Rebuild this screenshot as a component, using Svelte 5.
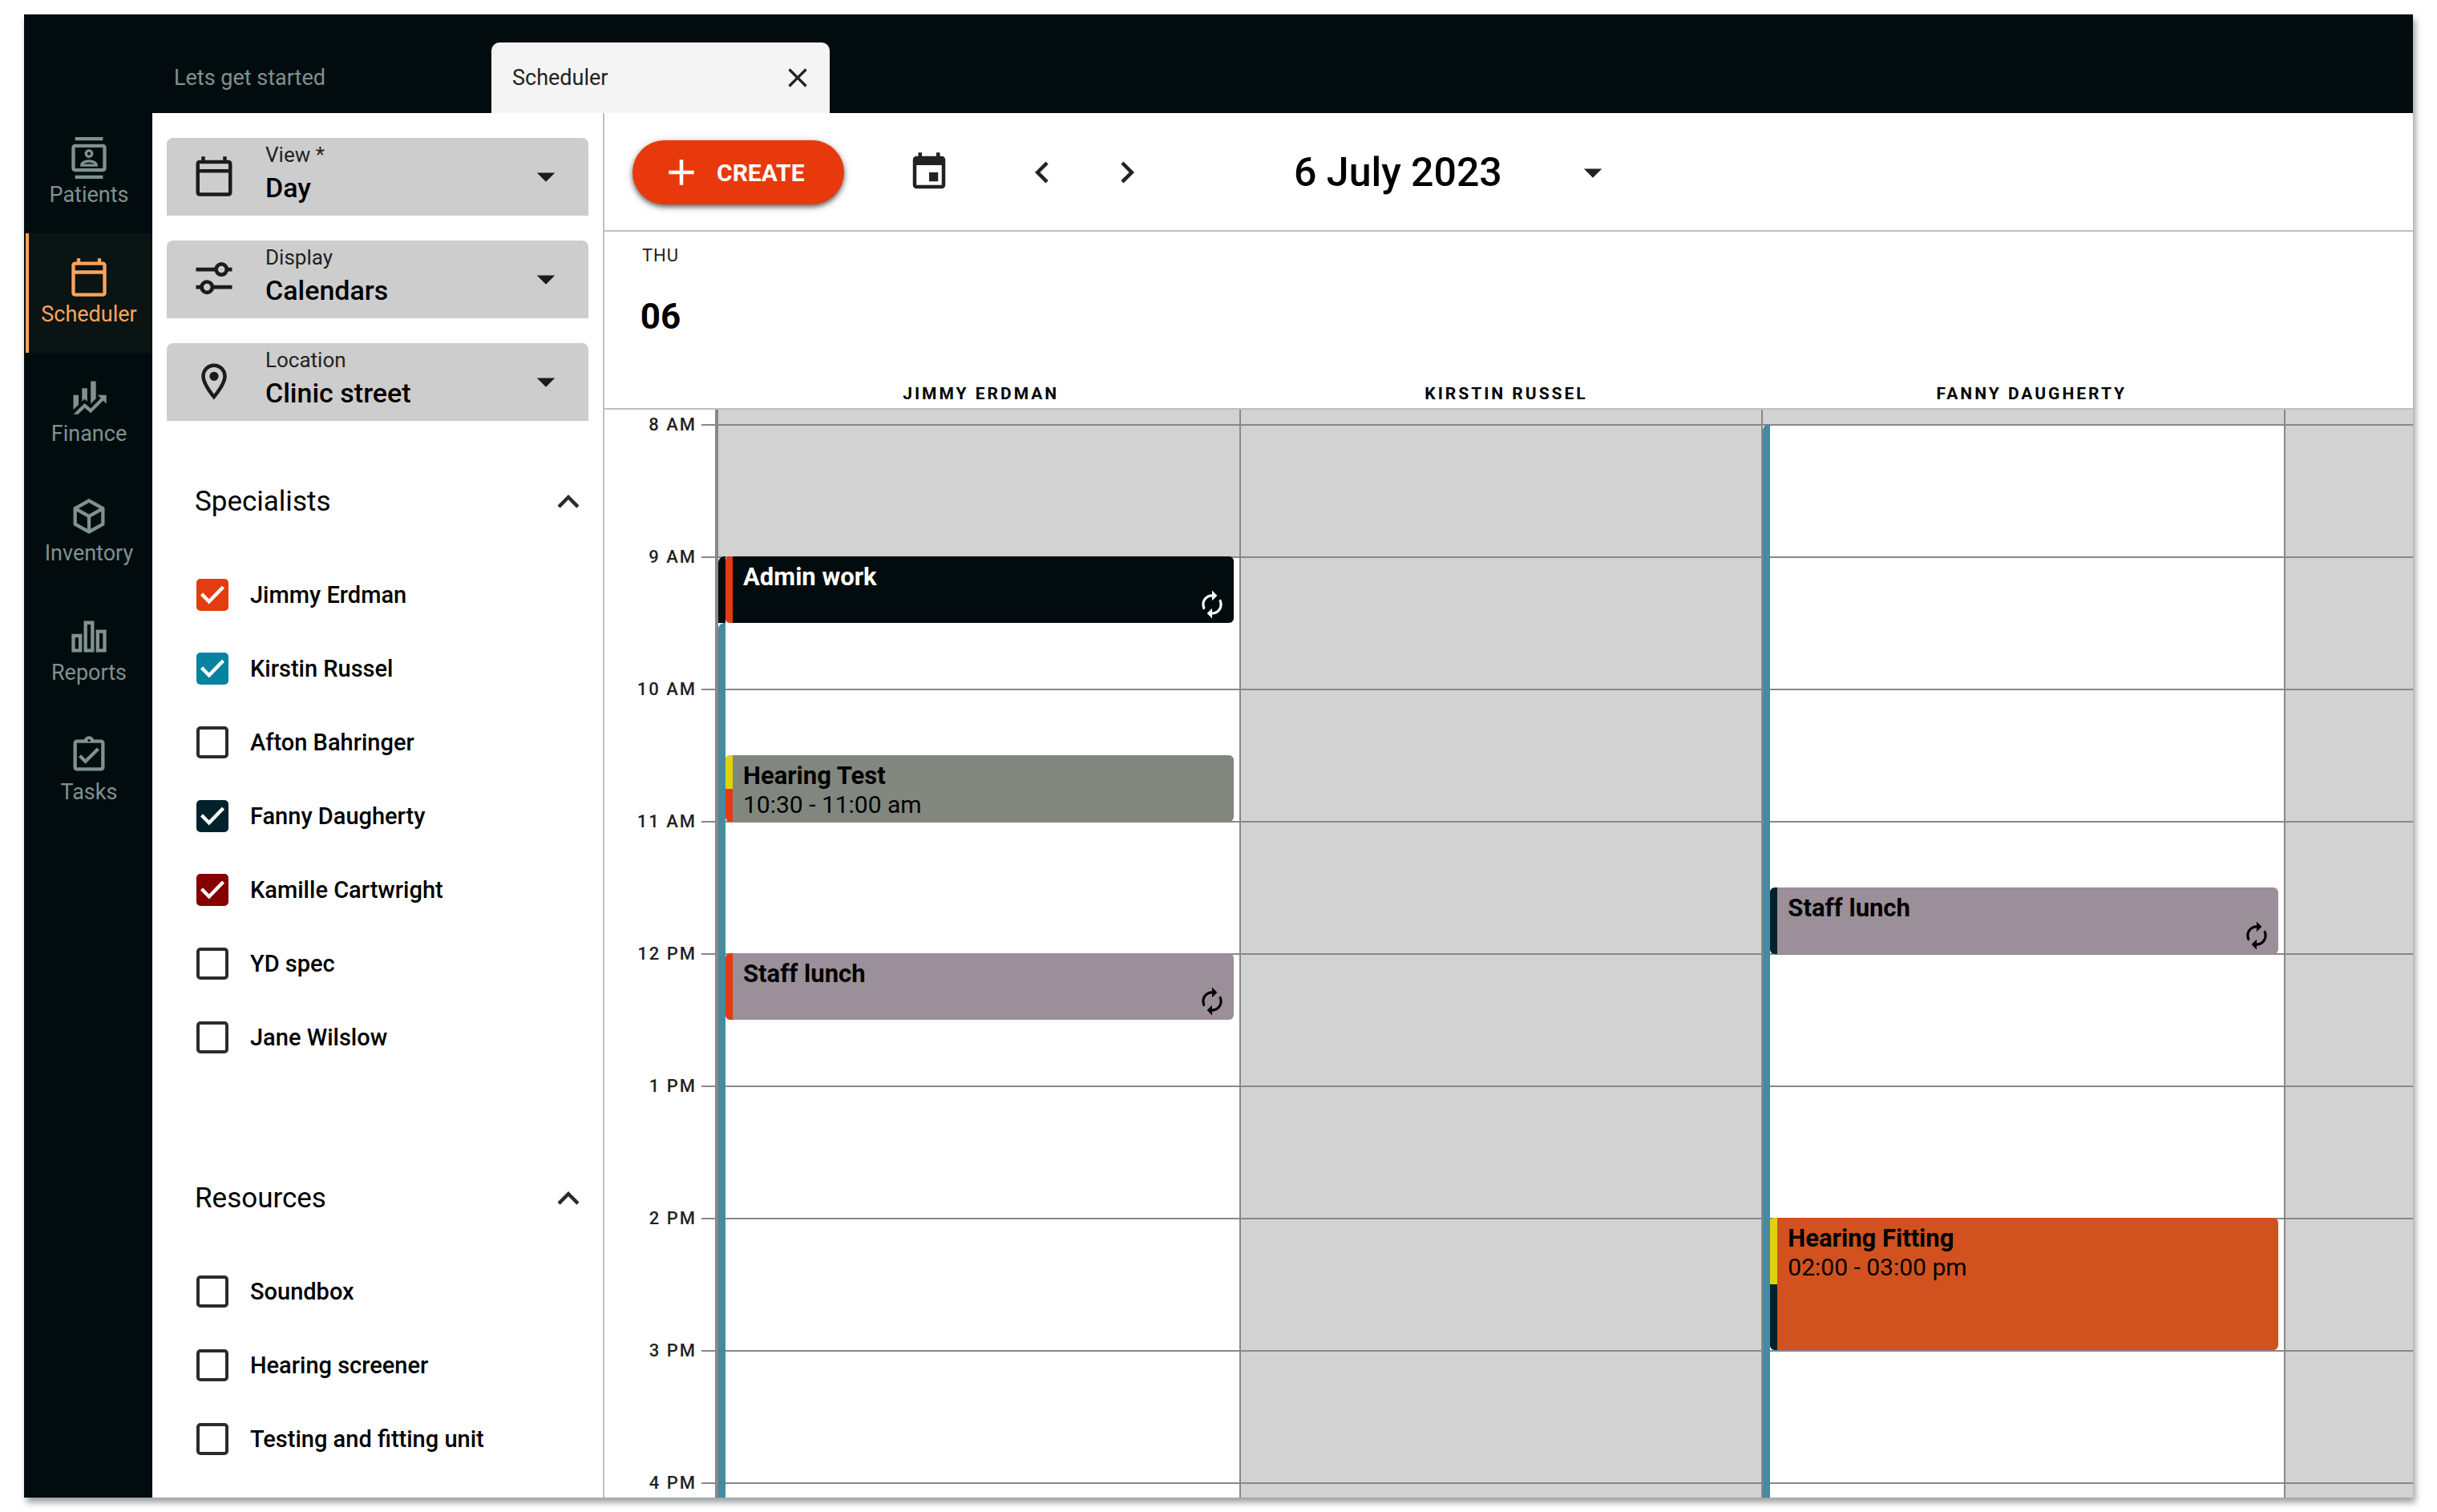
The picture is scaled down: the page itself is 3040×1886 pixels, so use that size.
<script>
  const HOUR_HEIGHT = 165;
  const FIRST_HOUR = 8;

  const navItems = [
    { name: 'Patients', icon: 'contacts' },
    { name: 'Scheduler', icon: 'calendar' },
    { name: 'Finance', icon: 'finance' },
    { name: 'Inventory', icon: 'cube' },
    { name: 'Reports', icon: 'bars' },
    { name: 'Tasks', icon: 'tasks' }
  ];
  let activeNav = $state('Scheduler');

  const fields = [
    { id: 'view', label: 'View *', icon: 'calendar', options: ['Day', 'Week', 'Month'] },
    { id: 'display', label: 'Display', icon: 'tune', options: ['Calendars', 'Resources'] },
    { id: 'location', label: 'Location', icon: 'place', options: ['Clinic street'] }
  ];

  let groups = $state([
    {
      title: 'Specialists',
      open: true,
      items: [
        { name: 'Jimmy Erdman', checked: true, color: '#e23c10' },
        { name: 'Kirstin Russel', checked: true, color: '#0583a0' },
        { name: 'Afton Bahringer', checked: false, color: '#2b2b2b' },
        { name: 'Fanny Daugherty', checked: true, color: '#02222b' },
        { name: 'Kamille Cartwright', checked: true, color: '#850000' },
        { name: 'YD spec', checked: false, color: '#2b2b2b' },
        { name: 'Jane Wilslow', checked: false, color: '#2b2b2b' }
      ]
    },
    {
      title: 'Resources',
      open: true,
      items: [
        { name: 'Soundbox', checked: false, color: '#2b2b2b' },
        { name: 'Hearing screener', checked: false, color: '#2b2b2b' },
        { name: 'Testing and fitting unit', checked: false, color: '#2b2b2b' }
      ]
    }
  ]);

  const hours = [8, 9, 10, 11, 12, 13, 14, 15, 16];

  // start and end are hours of the day, 10.5 is 10:30
  const lanes = [
    {
      name: 'Jimmy Erdman',
      shifts: [
        { start: 9, end: 9.5, color: '#020c0e' },
        { start: 9.5, end: 18, color: '#438ba1' }
      ],
      events: [
        { title: 'Admin work', start: 9, end: 9.5, bg: '#020c0e', fg: '#fff', stripes: ['#e23c10'], repeat: true },
        { title: 'Hearing Test', time: '10:30 - 11:00 am', start: 10.5, end: 11, bg: '#81877e', fg: '#000', stripes: ['#e0d20a', '#e23c10'] },
        { title: 'Staff lunch', start: 12, end: 12.5, bg: '#9b9099', fg: '#000', stripes: ['#e23c10'], repeat: true }
      ]
    },
    { name: 'Kirstin Russel', shifts: [], events: [] },
    {
      name: 'Fanny Daugherty',
      shifts: [{ start: 8, end: 18, color: '#438ba1' }],
      events: [
        { title: 'Staff lunch', start: 11.5, end: 12, bg: '#9b9099', fg: '#000', stripes: ['#02222b'], repeat: true },
        { title: 'Hearing Fitting', time: '02:00 - 03:00 pm', start: 14, end: 15, bg: '#d1521f', fg: '#000', stripes: ['#e0d20a', '#02222b'] }
      ]
    },
    { name: '', shifts: [], events: [] }
  ];

  function hourLabel(h) {
    return `${h > 12 ? h - 12 : h} ${h < 12 ? 'AM' : 'PM'}`;
  }

  function span(item) {
    const top = Math.round((item.start - FIRST_HOUR) * HOUR_HEIGHT);
    const height = Math.round((item.end - item.start) * HOUR_HEIGHT);
    return `top: ${top}px; height: ${height}px;`;
  }
</script>

{#snippet icon(name)}
  <svg class="icon" viewBox="0 0 24 24" aria-hidden="true">
    {#if name === 'contacts'}
      <path d="M20 4H4c-1.1 0-2 .9-2 2v12c0 1.1.9 2 2 2h16c1.1 0 2-.9 2-2V6c0-1.1-.9-2-2-2zm0 14H4V6h16v12zM4 0h16v2H4zm0 22h16v2H4zm8-10c1.38 0 2.5-1.12 2.5-2.5S13.38 7 12 7 9.5 8.12 9.5 9.5 10.62 12 12 12zm0-3.5c.55 0 1 .45 1 1s-.45 1-1 1-1-.45-1-1 .45-1 1-1zm5 7.49C17 13.9 13.69 13 12 13s-5 .9-5 2.99V17h10v-1.01zm-8.19-.49c.61-.52 2.03-1 3.19-1 1.17 0 2.59.48 3.2 1H8.81z" />
    {:else if name === 'calendar'}
      <path d="M20 3h-1V1h-2v2H7V1H5v2H4c-1.1 0-2 .9-2 2v16c0 1.1.9 2 2 2h16c1.1 0 2-.9 2-2V5c0-1.1-.9-2-2-2zm0 2v3H4V5h16zM4 21V10h16v11H4z" />
    {:else if name === 'finance'}
      <path d="M6 16.5 3 19.44V11h3m5 3.66-1.57-1.34L8 14.64V7h3m5 6-3 3V3h3m2.81 9.81L17 11h5v5l-1.79-1.79L13 21.36l-3.47-3.02L5.75 22H3l6.47-6.34L13 18.64" />
    {:else if name === 'cube'}
      <path d="M21 16.5c0 .38-.21.71-.53.88l-7.9 4.44c-.16.12-.36.18-.57.18s-.41-.06-.57-.18l-7.9-4.44A1 1 0 0 1 3 16.5v-9c0-.38.21-.71.53-.88l7.9-4.44c.16-.12.36-.18.57-.18s.41.06.57.18l7.9 4.44c.32.17.53.5.53.88v9zM12 4.15 6.04 7.5 12 10.85l5.96-3.35L12 4.15zM5 15.91l6 3.38v-6.71L5 9.21v6.7zm14 0v-6.7l-6 3.37v6.71l6-3.38z" />
    {:else if name === 'bars'}
      <path fill-rule="evenodd" d="M2 11h6v10.500H2zm2 2v6.500h2V13zM9 3.500h6v18H9zm2 2v14h2v-14zM16 8.500h6v13h-6zm2 2v9h2v-9z" />
    {:else if name === 'tasks'}
      <path d="M19 3h-4.180C14.400 1.840 13.300 1 12 1s-2.400.84-2.820 2H5c-1.100 0-2 .9-2 2v14c0 1.100.9 2 2 2h14c1.100 0 2-.9 2-2V5c0-1.100-.9-2-2-2zm-7-.25c.41 0 .75.34.75.75s-.34.75-.75.75-.75-.34-.75-.75.34-.75.75-.75zM19 19H5V5h14v14zM17.990 9l-1.410-1.420-6.590 6.590-2.580-2.570-1.420 1.410 4 3.990z" />
    {:else if name === 'tune'}
      <g fill="none" stroke="currentColor" stroke-width="2.100">
        <path d="M2 6.700h11M19 6.700h3M2 16.500h3M11 16.500h11" />
        <circle cx="16.100" cy="6.700" r="2.950" />
        <circle cx="8.100" cy="16.500" r="2.950" />
      </g>
    {:else if name === 'place'}
      <path d="M12 2C8.130 2 5 5.130 5 9c0 5.250 7 13 7 13s7-7.750 7-13c0-3.870-3.130-7-7-7zM7 9c0-2.760 2.240-5 5-5s5 2.240 5 5c0 2.880-2.880 7.190-5 9.880C9.920 16.210 7 11.850 7 9z" />
      <circle cx="12" cy="9" r="2.500" />
    {:else if name === 'event'}
      <path d="M17 12h-5v5h5v-5zM16 1v2H8V1H6v2H5c-1.110 0-1.990.9-1.990 2L3 19c0 1.100.89 2 2 2h14c1.100 0 2-.9 2-2V5c0-1.100-.9-2-2-2h-1V1h-2zm3 18H5V8h14v11z" />
    {:else if name === 'left'}
      <path d="M15.410 7.410 14 6l-6 6 6 6 1.410-1.410L10.830 12z" />
    {:else if name === 'right'}
      <path d="M10 6 8.590 7.410 13.170 12l-4.580 4.590L10 18l6-6z" />
    {:else if name === 'up'}
      <path d="m12 8-6 6 1.410 1.410L12 10.830l4.590 4.580L18 14z" />
    {:else if name === 'down'}
      <path d="m7 10 5 5 5-5z" />
    {:else if name === 'close'}
      <path d="M19 6.410 17.590 5 12 10.590 6.410 5 5 6.410 10.590 12 5 17.590 6.410 19 12 13.410 17.590 19 19 17.590 13.410 12z" />
    {:else if name === 'plus'}
      <path d="M19 13h-6v6h-2v-6H5v-2h6V5h2v6h6v2z" />
    {:else if name === 'repeat'}
      <path d="M12 6v3l4-4-4-4v3c-4.420 0-8 3.580-8 8 0 1.570.46 3.030 1.240 4.260L6.700 14.800c-.45-.83-.7-1.790-.7-2.800 0-3.310 2.690-6 6-6zm6.760 1.740L17.300 9.200c.44.84.7 1.790.7 2.800 0 3.310-2.690 6-6 6v-3l-4 4 4 4v-3c4.420 0 8-3.580 8-8 0-1.570-.46-3.030-1.240-4.260z" />
    {/if}
  </svg>
{/snippet}

<div class="page">
  <div class="app">
    <header class="tabs">
      <button class="tab">Lets get started</button>
      <div class="tab tab-active">
        <span>Scheduler</span>
        <button class="tab-close" aria-label="Close tab">{@render icon('close')}</button>
      </div>
    </header>

    <div class="body">
      <nav class="nav">
        {#each navItems as item}
          <button class="nav-item" class:active={activeNav === item.name} onclick={() => (activeNav = item.name)}>
            {@render icon(item.icon)}
            <span>{item.name}</span>
          </button>
        {/each}
      </nav>

      <aside class="panel">
        <div class="fields">
          {#each fields as field}
            <div class="field">
              {@render icon(field.icon)}
              <div class="field-text">
                <label for={field.id}>{field.label}</label>
                <select id={field.id}>
                  {#each field.options as option}
                    <option>{option}</option>
                  {/each}
                </select>
              </div>
              {@render icon('down')}
            </div>
          {/each}
        </div>

        {#each groups as group}
          <section class="group">
            <button class="group-title" aria-expanded={group.open} onclick={() => (group.open = !group.open)}>
              <span>{group.title}</span>
              {@render icon('up')}
            </button>
            {#if group.open}
              <div class="checks">
                {#each group.items as item}
                  <label class="check">
                    <input type="checkbox" bind:checked={item.checked} style="--tint: {item.color}" />
                    <span>{item.name}</span>
                  </label>
                {/each}
              </div>
            {/if}
          </section>
        {/each}
      </aside>

      <main class="main">
        <div class="toolbar">
          <button class="create">{@render icon('plus')}<span>CREATE</span></button>
          <button class="today" aria-label="Today">{@render icon('event')}</button>
          <button class="prev" aria-label="Previous day">{@render icon('left')}</button>
          <button class="next" aria-label="Next day">{@render icon('right')}</button>
          <button class="date"><span>6 July 2023</span>{@render icon('down')}</button>
        </div>

        <div class="day-head">
          <div class="day">
            <span class="weekday">THU</span>
            <span class="day-number">06</span>
          </div>
          <div class="names">
            {#each lanes as lane}
              <span>{lane.name}</span>
            {/each}
          </div>
        </div>

        <div class="calendar">
          <div class="gutter">
            {#each hours as h}
              <div class="hour-label"><span>{hourLabel(h)}</span><i></i></div>
            {/each}
          </div>
          <div class="lanes">
            {#each lanes as lane}
              <div class="lane">
                <div class="track">
                  {#each hours as h}
                    <div class="slot" class:free={lane.shifts.some((s) => h >= Math.floor(s.start) && h < s.end)}></div>
                  {/each}
                  {#each lane.shifts as shift}
                    <div class="shift" style="{span(shift)} background: {shift.color};"></div>
                  {/each}
                  {#each lane.events as event}
                    <div class="event" style="{span(event)} background: {event.bg}; color: {event.fg};">
                      <div class="stripes">
                        {#each event.stripes as stripe}
                          <i style="background: {stripe}"></i>
                        {/each}
                      </div>
                      <div class="event-text">
                        <strong>{event.title}</strong>
                        {#if event.time}<span>{event.time}</span>{/if}
                      </div>
                      {#if event.repeat}{@render icon('repeat')}{/if}
                    </div>
                  {/each}
                </div>
              </div>
            {/each}
          </div>
        </div>
      </main>
    </div>
  </div>
</div>

<style>
  :global(body) {
    margin: 0;
    background: #fff;
  }

  .page {
    box-sizing: border-box;
    height: 100vh;
    padding: 18px 30px;
    overflow: hidden;
    font-family: Roboto, 'Liberation Sans', sans-serif;
    color: #000;
  }

  .page * {
    box-sizing: border-box;
  }

  button {
    margin: 0;
    padding: 0;
    border: none;
    background: none;
    font: inherit;
    color: inherit;
    cursor: pointer;
  }

  .icon {
    display: block;
    flex: none;
    width: 54px;
    height: 54px;
    fill: currentColor;
  }

  .app {
    display: flex;
    flex-direction: column;
    height: 100%;
    background: #020c0e;
    box-shadow: 3px 6px 8px rgba(0, 12, 12, 0.4);
  }

  /* top tabs */
  .tabs {
    display: flex;
    align-items: flex-end;
    flex: none;
    height: 123px;
    padding-left: 161px;
    font-size: 27px;
  }

  .tab {
    display: flex;
    align-items: center;
    width: 422px;
    height: 88px;
    padding: 0 26px;
    color: #7f9190;
  }

  .tab-active {
    justify-content: space-between;
    padding-right: 20px;
    border-radius: 10px 10px 0 0;
    background: #f4f4f4;
    color: #222;
  }

  .tab-close .icon {
    width: 40px;
    height: 40px;
  }

  .body {
    display: flex;
    flex: 1;
    min-height: 0;
  }

  /* left navigation */
  .nav {
    flex: none;
    width: 160px;
    padding: 1px 0 0 2px;
  }

  .nav-item {
    display: flex;
    flex-direction: column;
    align-items: center;
    gap: 4px;
    width: 100%;
    height: 149px;
    padding: 29px 4px 0 0;
    border-left: 4px solid transparent;
    font-size: 27px;
    line-height: 32px;
    color: #7f9190;
  }

  .nav-item .icon {
    width: 52px;
    height: 52px;
  }

  .nav-item.active {
    border-left-color: #ffa35c;
    background: #0a1413;
    color: #ffa35c;
  }

  /* filter panel */
  .panel {
    flex: none;
    width: 564px;
    border-right: 2px solid #bcc1c0;
    background: #fff;
    overflow: hidden;
  }

  .fields {
    display: flex;
    flex-direction: column;
    gap: 31px;
    padding: 31px 18px 0;
  }

  .field {
    display: flex;
    align-items: center;
    height: 97px;
    padding: 0 26px 2px 32px;
    border-radius: 8px 8px 0 0;
    background: #cdcdcd;
    color: #1c1c1c;
  }

  .field-text {
    display: flex;
    flex-direction: column;
    flex: 1;
    gap: 6px;
    padding: 0 0 7px 37px;
  }

  .field label {
    font-size: 26px;
    line-height: 30px;
    color: #222;
  }

  .field select {
    height: 40px;
    margin: 0;
    padding: 0;
    border: none;
    outline: none;
    appearance: none;
    background: transparent;
    font: 500 34px/40px Roboto, 'Liberation Sans', sans-serif;
    color: #000;
  }

  .group {
    padding: 0 16px 0 53px;
    margin-top: 79px;
  }

  .group + .group {
    margin-top: 133px;
  }

  .group-title {
    display: flex;
    align-items: center;
    justify-content: space-between;
    width: 100%;
    height: 44px;
    font-size: 35px;
    line-height: 44px;
  }

  .group-title .icon {
    color: #2b2b2b;
  }

  .checks {
    margin-top: 48px;
  }

  .check {
    display: flex;
    align-items: center;
    gap: 27px;
    height: 92px;
    padding-left: 2px;
    font-size: 29px;
    line-height: 36px;
    font-weight: 500;
  }

  .check input {
    display: grid;
    place-items: center;
    width: 40px;
    height: 40px;
    margin: 0;
    border: 4px solid #2b2b2b;
    border-radius: 5px;
    appearance: none;
  }

  .check input:checked {
    border-color: var(--tint);
    background: var(--tint);
  }

  .check input:checked::after {
    content: '';
    width: 30px;
    height: 23px;
    background: #fff;
    clip-path: polygon(36% 100%, 0 52%, 10% 38%, 36% 73%, 90% 0, 100% 14%);
  }

  /* toolbar */
  .main {
    display: flex;
    flex-direction: column;
    flex: 1;
    min-width: 0;
    background: #fff;
  }

  .toolbar {
    display: flex;
    align-items: center;
    flex: none;
    height: 148px;
    padding: 2px 0 0 35px;
    border-bottom: 2px solid #b9c0be;
    color: #222;
  }

  .create {
    display: flex;
    align-items: center;
    gap: 17px;
    width: 264px;
    height: 80px;
    padding-left: 34px;
    border-radius: 40px;
    background: #e8390c;
    box-shadow: 0 3px 6px rgba(0, 0, 0, 0.6), 0 2px 14px rgba(0, 0, 0, 0.1);
    color: #fff;
    font-size: 30px;
    font-weight: 700;
  }

  .today {
    margin-left: 79px;
  }

  .prev {
    margin-left: 87px;
  }

  .next {
    margin-left: 52px;
  }

  .date {
    display: flex;
    align-items: center;
    gap: 86px;
    margin-left: 181px;
    font-size: 50px;
    line-height: 60px;
    font-weight: 500;
  }

  .date span {
    color: #000;
  }

  /* day heading */
  .day-head {
    flex: none;
    padding: 16px 0 4px;
    border-bottom: 2px solid #b9c0be;
  }

  .day {
    display: flex;
    flex-direction: column;
    align-items: center;
    gap: 36px;
    width: 140px;
    margin-bottom: 56px;
  }

  .weekday {
    font-size: 22px;
    line-height: 28px;
    letter-spacing: 1px;
    color: #222;
  }

  .day-number {
    font-size: 44px;
    line-height: 52px;
    font-weight: 700;
  }

  .names,
  .lanes {
    display: grid;
    grid-template-columns: repeat(3, 41fr) 10fr;
  }

  .names {
    grid-template-columns: repeat(3, 31fr) 7fr;
    margin-left: 142px;
    font-size: 21px;
    line-height: 28px;
    font-weight: 700;
    letter-spacing: 3px;
    text-align: center;
    text-transform: uppercase;
  }

  /* hour grid */
  .calendar {
    display: flex;
    flex: 1;
    min-height: 0;
    overflow: hidden;
  }

  .gutter {
    flex: none;
    width: 142px;
    padding-top: 5px;
    border-right: 4px solid #888;
  }

  .hour-label {
    display: flex;
    align-items: center;
    justify-content: flex-end;
    gap: 6px;
    height: 28px;
    margin-bottom: 137px;
    font-size: 22px;
    line-height: 28px;
    font-weight: 500;
    letter-spacing: 2px;
    color: #222;
  }

  .hour-label i {
    width: 17px;
    height: 2px;
    background: #888;
  }

  .lanes {
    flex: 1;
  }

  .lane {
    padding-top: 18px;
    border-right: 2px solid #888;
    background: #d2d2d2;
  }

  .lane:last-child {
    border-right: none;
  }

  .track {
    position: relative;
  }

  .slot {
    height: 165px;
    border-top: 2px solid #888;
  }

  .slot.free {
    background: #fff;
  }

  .shift {
    position: absolute;
    left: 0;
    width: 9px;
    border-top-left-radius: 8px;
  }

  .event {
    position: absolute;
    left: 9px;
    right: 7px;
    display: flex;
    border-radius: 6px;
    overflow: hidden;
    font-size: 30px;
    line-height: 36px;
  }

  .stripes {
    display: flex;
    flex-direction: column;
    width: 9px;
  }

  .stripes i {
    flex: 1;
  }

  .event-text {
    display: flex;
    flex-direction: column;
    flex: 1;
    padding: 8px 0 0 13px;
  }

  .event-text strong {
    font-size: 31px;
    font-weight: 700;
  }

  .event .icon {
    align-self: flex-end;
    width: 38px;
    height: 38px;
    margin: 0 8px 4px 0;
  }
</style>
